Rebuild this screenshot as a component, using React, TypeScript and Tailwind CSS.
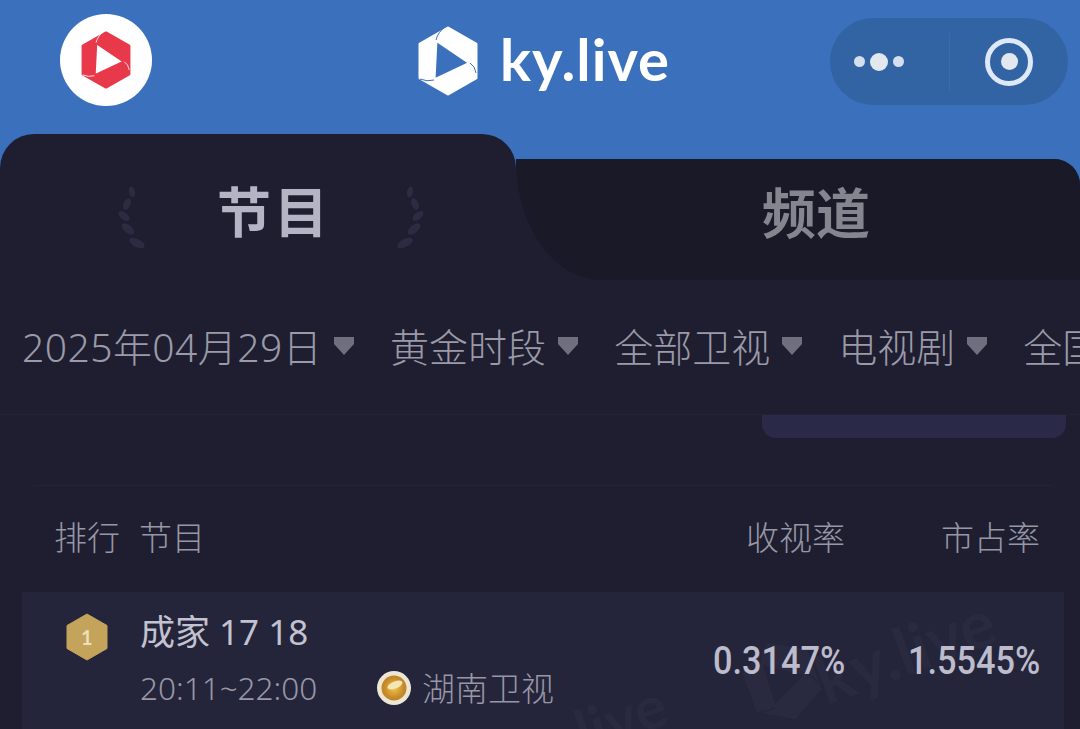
const cjk = "font-['Noto_Sans','Noto_Sans_CJK_SC',sans-serif]";

function HexLogo({ fill, cut, className }: { fill: string; cut: string; className: string }) {
  return (
    <svg viewBox="0 0 60 70" className={className}>
      <path
        fillRule="evenodd"
        fill={fill}
        stroke={fill}
        strokeWidth="3"
        strokeLinejoin="round"
        d="M30 2 L58 18 V52 L30 68 L2 52 V18 Z M18 14 L52 37 L16 54 Z"
      />
      <path d="M18 14 Q20 6 27 1" fill="none" stroke={cut} strokeWidth="1" />
      <path d="M52 37 Q57 40 58 47" fill="none" stroke={cut} strokeWidth="1" />
      <path d="M16 54 Q9 56 2 53" fill="none" stroke={cut} strokeWidth="1" />
    </svg>
  );
}

function Laurel({ flip }: { flip?: boolean }) {
  // 叶子: cx, cy, rx, ry, 角度
  const leaves = [
    [15, 6, 3, 5.5, -12],
    [10, 18, 3.5, 6, 25],
    [7, 30, 3.5, 6.5, -50],
    [11, 43, 4, 7.5, -50],
    [20, 57, 4, 8.5, -62],
  ];
  return (
    <svg viewBox="0 0 32 66" className={flip ? "w-8 h-[66px] -scale-x-100" : "w-8 h-[66px]"}>
      {leaves.map(([x, y, rx, ry, r]) => (
        <ellipse key={y} cx={x} cy={y} rx={rx} ry={ry} fill="#2b2b42" transform={`rotate(${r} ${x} ${y})`} />
      ))}
    </svg>
  );
}

function Caret() {
  return (
    <svg viewBox="0 0 22 20" className="w-[22px] h-5 shrink-0">
      <path d="M1 1 H21 V8 L11 19 L1 8 Z" fill="#6f6f80" strokeLinejoin="round" />
    </svg>
  );
}

function Filter({ label, className }: { label: string; className?: string }) {
  return (
    <div className="flex items-center gap-[11px] shrink-0">
      <span className={className}>{label}</span>
      <Caret />
    </div>
  );
}

export default function App() {
  return (
    <div className={`w-[1080px] h-[729px] overflow-hidden bg-[#3a70bc] flex flex-col ${cjk}`}>
      {/* 顶部栏 */}
      <header className="h-[134px] shrink-0 flex items-start pl-[60px]">
        <div className="mt-[14px] w-[92px] h-[92px] rounded-full bg-white flex items-center justify-center">
          <HexLogo fill="#e8394a" cut="#ffffff" className="w-[50px] h-[58px]" />
        </div>
        <div className="ml-[266px] mt-[26px] flex items-center gap-[22px] h-[70px] w-[250px]">
          <HexLogo fill="#ffffff" cut="#3a70bc" className="w-[60px] h-[70px] shrink-0" />
          <span className="font-['Lato',sans-serif] font-bold text-[58px] leading-none text-white -mt-[4px] tracking-[1px]">
            ky.live
          </span>
        </div>
        <div className="ml-[162px] mt-[18px] w-[238px] h-[87px] rounded-full bg-[#3264a4] flex items-center">
          <div className="w-[119px] flex items-center justify-center gap-[5px] pr-[22px]">
            <span className="w-[11px] h-[11px] rounded-full bg-[#d5deec]" />
            <span className="w-[18px] h-[18px] rounded-full bg-[#e3e7ee]" />
            <span className="w-[11px] h-[11px] rounded-full bg-[#d5deec]" />
          </div>
          <div className="w-px h-[58px] bg-[#3a6cad]" />
          <div className="flex-1 flex items-center justify-center">
            <div className="w-[48px] h-[48px] rounded-full border-[5px] border-[#dfe8f6] flex items-center justify-center">
              <span className="w-[17px] h-[17px] rounded-full bg-[#e3e7ee]" />
            </div>
          </div>
        </div>
      </header>

      {/* 标签 */}
      <div className="flex h-[146px] shrink-0">
        <div className="w-[516px] bg-[#1e1e30] rounded-t-[34px] pl-[26px] flex items-start justify-center pt-[52px] gap-[68px]">
          <Laurel />
          <span className="font-['Noto_Sans_CJK_SC',sans-serif] font-bold text-[54px] leading-[60px] tracking-[3px] text-[#b4b4c4] -mt-[6px] w-[108px] whitespace-nowrap">节目</span>
          <Laurel flip />
        </div>
        <div className="flex-1 mt-[25px] bg-[#1e1e30] rounded-tr-[26px]">
          <div className="h-full bg-[#191928] rounded-tr-[26px] rounded-bl-[85px_120px] flex justify-center pl-[36px] pt-[22px]">
            <span className="font-['Noto_Sans_CJK_SC',sans-serif] font-bold text-[54px] leading-[60px] text-[#85858f]">频道</span>
          </div>
        </div>
      </div>

      {/* 内容 */}
      <div className="flex-1 bg-[#1e1e30] flex flex-col min-h-0">
        <div className="h-[134px] shrink-0 flex items-center pl-[22px] pb-[2px] gap-[35px] overflow-hidden whitespace-nowrap text-[39px] leading-none text-[#9a9aa8] font-light">
          <Filter label="2025年04月29日" className="tracking-[0.45px]" />
          <Filter label="黄金时段" />
          <Filter label="全部卫视" />
          <Filter label="电视剧" />
          <Filter label="全国" />
        </div>
        <div className="border-t border-[#222236] flex justify-end pr-[14px] shrink-0">
          <div className="w-[304px] h-[23px] rounded-b-[14px] bg-[#2a2a48]" />
        </div>
        <div className="mt-[47px] ml-[22px] mr-[16px] border-t border-[#24243a] rounded-t-[16px] flex-1 flex flex-col">
          <div className="h-[106px] shrink-0 flex items-center pl-[32px] pr-[24px] pb-[4px] text-[33px] leading-none text-[#9797a6] font-light">
            <span className="w-[85px]">排行</span>
            <span className="flex-1">节目</span>
            <span className="w-[195px] text-right">收视率</span>
            <span className="w-[195px] text-right">市占率</span>
          </div>
          <div className="relative flex-1 bg-[#24243a] overflow-hidden flex items-start pl-[44px] pr-[24px]">
            {/* 水印 */}
            <HexLogo fill="#29293f" cut="#24243a" className="absolute left-[725px] top-[48px] w-[70px] h-[82px] -rotate-[20deg]" />
            <span className="absolute left-[790px] top-[25px] font-['Lato',sans-serif] font-bold text-[66px] leading-none text-[#29293f] -rotate-[20deg]">
              ky.live
            </span>
            <span className="absolute left-[552px] top-[95px] font-['Lato',sans-serif] font-bold text-[60px] leading-none text-[#29293f] -rotate-[20deg]">
              live
            </span>
            <svg viewBox="0 0 42 48" className="relative w-[42px] h-[48px] mt-[21px] shrink-0">
              <path d="M21 1 L41 12.5 V35.5 L21 47 L1 35.5 V12.5 Z" fill="#c4a35a" stroke="#c4a35a" strokeLinejoin="round" />
            </svg>
            <span className="absolute left-[59px] top-[35px] font-['Lato',sans-serif] font-bold text-[20px] leading-none text-[#ecdfbd]">1</span>
            <div className="relative ml-[32px] flex-1 pt-[19px]">
              <div className="text-[35px] leading-[42px] text-[#c2c2d0] whitespace-nowrap">成家 17 18</div>
              <div className="mt-[18px] flex items-center text-[#9797a6] font-light whitespace-nowrap">
                <span className="text-[31.5px] leading-none w-[237px]">20:11~22:00</span>
                <svg viewBox="0 0 34 34" className="w-[34px] h-[34px] shrink-0">
                  <defs>
                    <radialGradient id="hn" cx="50%" cy="50%" r="55%">
                      <stop offset="0%" stopColor="#f0c64a" />
                      <stop offset="70%" stopColor="#c98a2a" />
                      <stop offset="100%" stopColor="#b9802c" />
                    </radialGradient>
                  </defs>
                  <circle cx="17" cy="17" r="17" fill="#ece6d2" />
                  <circle cx="17" cy="17" r="12.5" fill="url(#hn)" />
                  <ellipse cx="18" cy="14" rx="8" ry="3.5" fill="#f4e6b4" transform="rotate(-22 18 14)" />
                </svg>
                <span className="ml-[11px] text-[33px] leading-none">湖南卫视</span>
              </div>
            </div>
            <div className="relative w-[195px] pt-[50px] text-right">
              <span className="inline-block origin-right scale-x-[0.88] font-['Roboto',sans-serif] font-medium text-[39px] leading-none text-[#bcbccc]">0.3147%</span>
            </div>
            <div className="relative w-[195px] pt-[50px] text-right">
              <span className="inline-block origin-right scale-x-[0.88] font-['Roboto',sans-serif] font-medium text-[39px] leading-none text-[#bcbccc]">1.5545%</span>
            </div>
          </div>
        </div>
      </div>
    </div>
  );
}
